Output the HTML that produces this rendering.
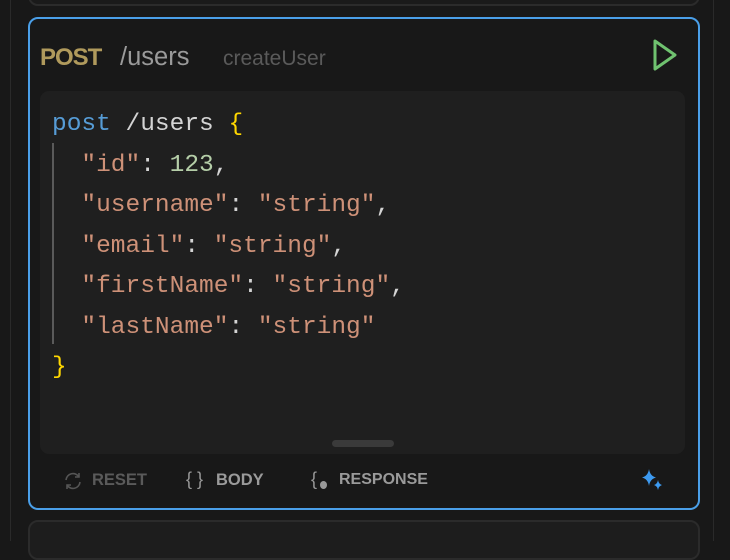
<!DOCTYPE html>
<html><head><style>
body{margin:0;width:730px;height:541px;background:#181818;position:relative;overflow:hidden;font-family:"Liberation Sans",sans-serif}
.vl{position:absolute;top:0;bottom:0;width:1px;background:#2a2a2a}
.card{position:absolute;border-radius:10px;box-sizing:border-box}
.top{left:28px;top:-20px;width:672px;height:26px;border:2px solid #2b2b2b;background:#1a1a1a}
.bot{left:28px;top:520px;width:672px;height:40px;border:2px solid #2b2b2b;background:#1d1d1d}
.main{left:28px;top:17px;width:672px;height:493px;border:2px solid #4a9fe8;background:#181818}
.hdr{position:absolute;top:44px;font-size:24px}
.code{position:absolute;left:40px;top:91px;width:645px;height:363px;background:#1f1f1f;border-radius:9px}
pre{margin:0;position:absolute;left:52px;top:105px;font-family:"Liberation Mono",monospace;font-size:24.5px;line-height:40.5px;color:#d4d4d4}
.k{color:#569cd6}.s{color:#ce9178}.n{color:#b5cea8}.b{color:#ffd700}
.guide{position:absolute;left:52px;top:143px;width:2px;height:201px;background:#5a5a5a}
.handle{position:absolute;left:332px;top:440px;width:62px;height:7px;border-radius:4px;background:#3a3a3a}
.btn{position:absolute;top:471px;font-size:16px;font-weight:bold;color:#9a9a9a}
</style></head><body>
<div class="vl" style="left:10px"></div>
<div class="vl" style="left:713px"></div>
<div class="card top"></div>
<div class="card main"></div>
<div class="card bot"></div>
<div class="hdr" style="left:40px;color:#b09a5c;font-weight:bold;letter-spacing:-1px">POST</div>
<div class="hdr" style="left:120px;font-size:25.5px;top:43px;color:#9a9a9a">/users</div>
<div class="hdr" style="left:223px;top:47px;font-size:21px;color:#5a5a5a">createUser</div>
<svg style="position:absolute;left:650px;top:38px" width="30" height="34" viewBox="0 0 30 34"><path d="M5 3 L25 17 L5 31 Z" fill="none" stroke="#6fc26f" stroke-width="3" stroke-linejoin="round"/></svg>
<div class="code"></div>
<div class="guide"></div>
<pre><span class="k">post</span> /users <span class="b">{</span>
  <span class="s">"id"</span>: <span class="n">123</span>,
  <span class="s">"username"</span>: <span class="s">"string"</span>,
  <span class="s">"email"</span>: <span class="s">"string"</span>,
  <span class="s">"firstName"</span>: <span class="s">"string"</span>,
  <span class="s">"lastName"</span>: <span class="s">"string"</span>
<span class="b">}</span></pre>
<div class="handle"></div>
<svg style="position:absolute;left:62px;top:471px" width="22" height="20" viewBox="0 0 22 20"><path d="M4 9a7 7 0 0 1 13-3M18 11a7 7 0 0 1-13 3M17 2v4h-4M5 18v-4h4" fill="none" stroke="#555" stroke-width="1.6"/></svg>
<div class="btn" style="left:92px;color:#5a5a5a;font-size:16.5px">RESET</div>
<div class="btn" style="left:186px;font-weight:normal;color:#999;font-size:18px;top:469px">{ }</div>
<div class="btn" style="left:216px;font-size:16.5px">BODY</div>
<div class="btn" style="left:311px;font-weight:normal;color:#999;font-size:18px;top:469px">{</div>
<div style="position:absolute;left:320px;top:481px;width:7px;height:8px;border-radius:50%;background:#999"></div>
<div class="btn" style="left:339px">RESPONSE</div>
<svg style="position:absolute;left:640px;top:468px" width="26" height="26" viewBox="0 0 26 26"><path d="M9 1Q10 8 16 9.5Q10 11 9 18Q8 11 2 9.5Q8 8 9 1Z" fill="#3d9af0"/><path d="M18 12Q18.7 16 22 17Q18.7 18 18 22Q17.3 18 14 17Q17.3 16 18 12Z" fill="#3d9af0"/></svg>
</body></html>
